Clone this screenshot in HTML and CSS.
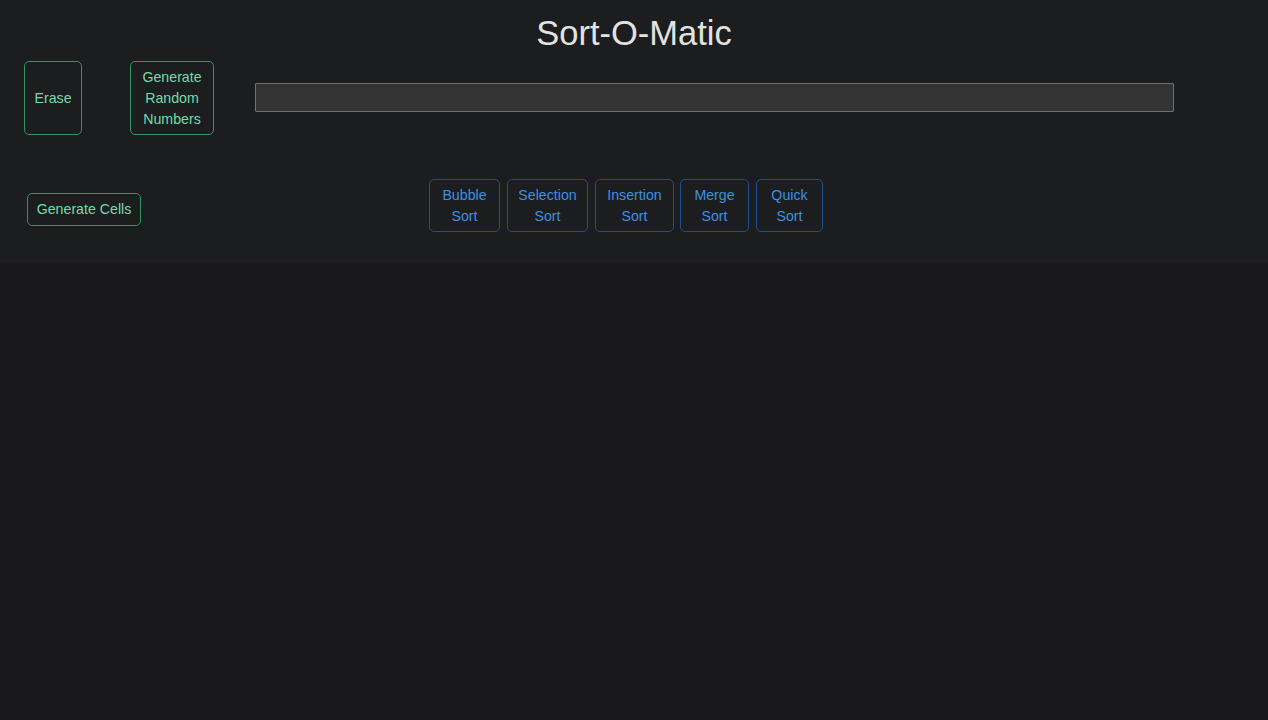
FILE: index.html
```html
<!DOCTYPE html>
<html lang="en">
<head>
<meta charset="utf-8">
<title>Sort-O-Matic</title>
<link rel="stylesheet" href="styles.css">
</head>
<body>
<div class="panel">
  <h1 class="title">Sort-O-Matic</h1>
  <div class="row-top">
    <button class="btn green erase">Erase</button>
    <button class="btn green gen-random">Generate<br>Random<br>Numbers</button>
    <input class="numbers" type="text">
  </div>
  <div class="row-bottom">
    <button class="btn green gen-cells">Generate Cells</button>
    <div class="sorts">
      <button class="btn blue bubble">Bubble<br>Sort</button>
      <button class="btn blue selection">Selection<br>Sort</button>
      <button class="btn blue insertion">Insertion<br>Sort</button>
      <button class="btn blue merge">Merge<br>Sort</button>
      <button class="btn blue quick">Quick<br>Sort</button>
    </div>
  </div>
</div>
</body>
</html>
```
FILE: styles.css
```css
html, body {
  margin: 0;
  padding: 0;
  background: #18181a;
  font-family: "Liberation Sans", Arial, sans-serif;
  height: 100%;
}
.panel {
  background: #1c1d1f;
  height: 263px;
  box-sizing: border-box;
  padding-top: 13px;
}
.title {
  margin: 0;
  text-align: center;
  font-weight: normal;
  font-size: 34.5px;
  line-height: 40px;
  color: #e2e2e2;
}
.row-top {
  display: flex;
  align-items: center;
  margin-top: 8px;
  padding-left: 24px;
}
.btn {
  background: transparent;
  font-family: "Liberation Sans", Arial, sans-serif;
  font-size: 14.2px;
  line-height: 21px;
  border-radius: 5px;
  cursor: pointer;
  box-sizing: border-box;
  margin: 0;
  padding: 0;
  text-align: center;
  outline: none;
}
.green {
  color: #72dca8;
  border: 1px solid #2f9466;
}
.blue {
  color: #3d90e6;
  border: 1px solid #1e4d92;
  height: 53px;
  line-height: 20.5px;
}
.erase {
  width: 58px;
  height: 74px;
}
.gen-random {
  width: 84px;
  height: 74px;
  margin-left: 48px;
}
.numbers {
  margin-left: 41px;
  margin-top: -2px;
  width: 919px;
  height: 29px;
  box-sizing: border-box;
  background: #333334;
  border: 1px solid #707070;
  border-radius: 1px;
  color: #ddd;
}
.row-bottom {
  display: flex;
  align-items: center;
  margin-top: 44px;
  padding-left: 27px;
}
.gen-cells {
  width: 114px;
  height: 33px;
  margin-top: 8px;
}
.sorts {
  display: flex;
  gap: 7px;
  margin-left: 288px;
}
.bubble { width: 71px; }
.selection { width: 81px; }
.insertion { width: 79px; }
.merge { width: 69px; margin-left: -1px; }
.quick { width: 67px; }
```
